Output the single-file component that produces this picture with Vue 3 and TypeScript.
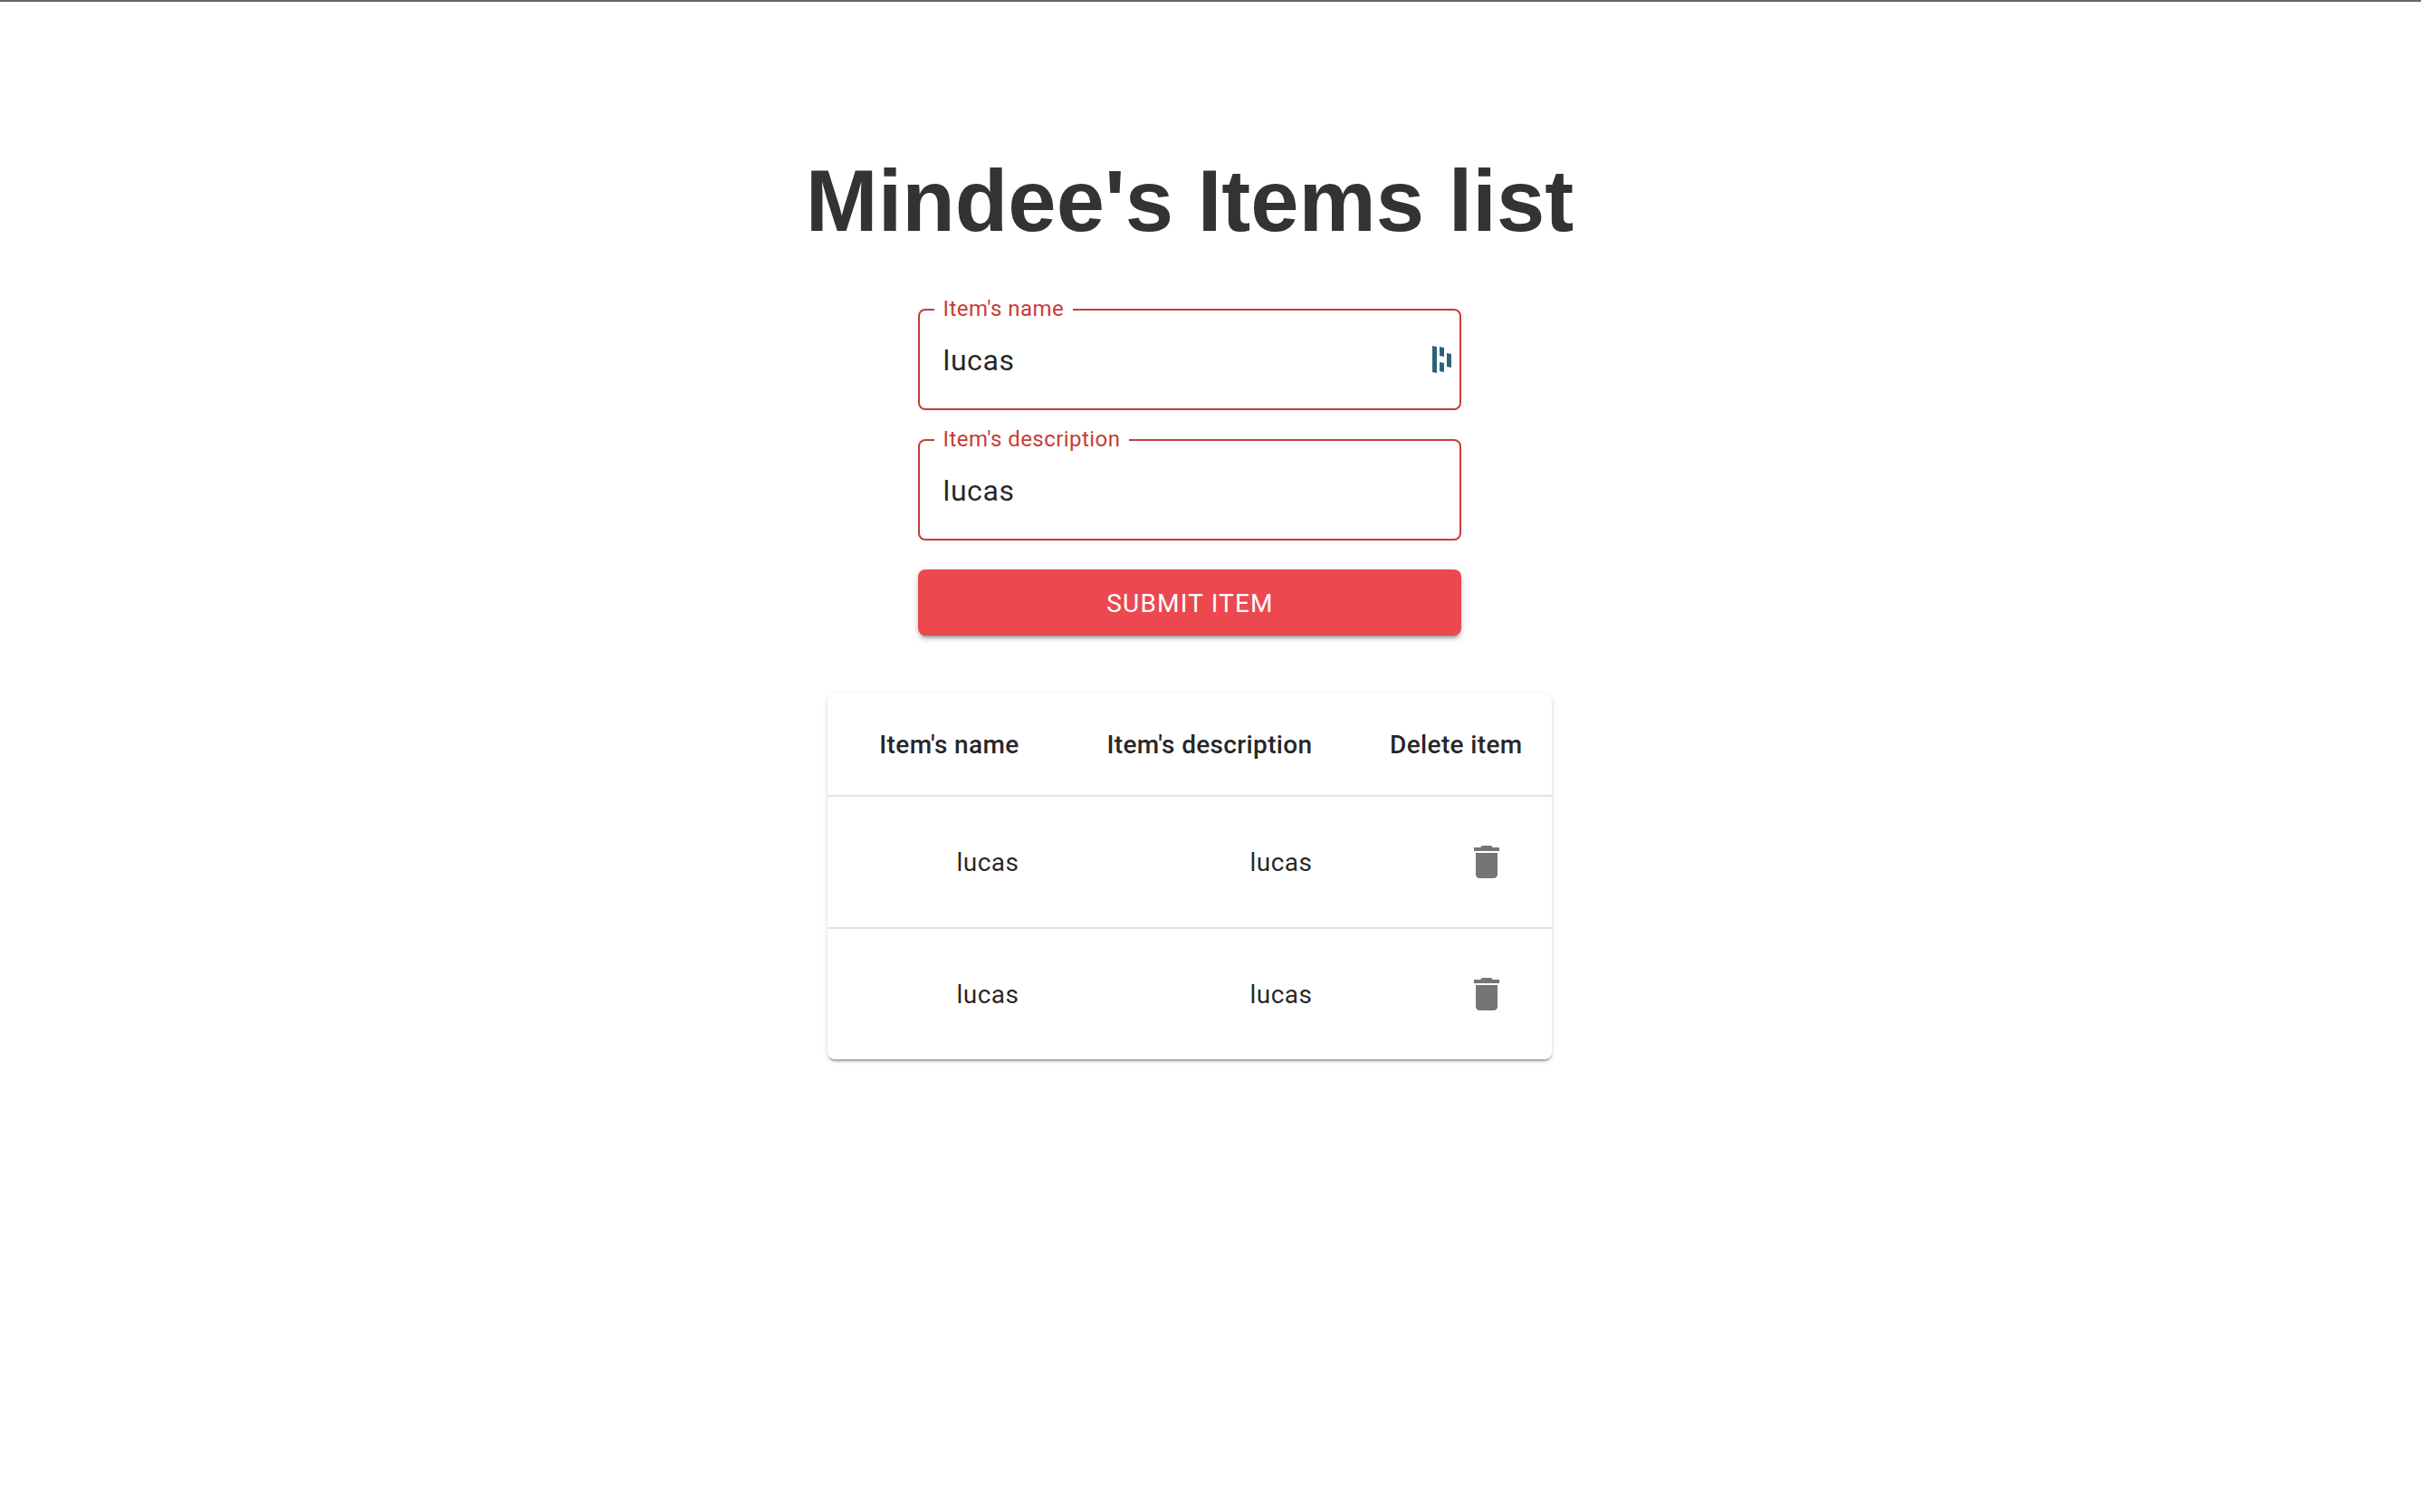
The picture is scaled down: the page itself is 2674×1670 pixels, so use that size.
<template>
  <div class="page">
    <h1 class="page__title">Mindee's Items list</h1>

    <form class="item-form" @submit.prevent>
      <div v-for="(field, index) in fields" :key="field.label" class="field">
        <input v-model="field.value" type="text" class="field__input" />
        <fieldset class="field__outline">
          <legend class="field__label">{{ field.label }}</legend>
        </fieldset>
        <svg v-if="index === 0" class="field__manager" viewBox="0 0 24 32" aria-hidden="true">
          <path d="M1 1l5 1v29l-5-1z" />
          <path d="M9 2l5 1v10l-5-1zM9 19l5 1v10l-5-1z" />
          <path d="M17 9l5 1v15l-5-1z" />
        </svg>
      </div>
      <button type="submit" class="item-form__submit">Submit item</button>
    </form>

    <div class="items">
      <table class="items__table">
        <colgroup>
          <col class="items__col-name" />
          <col class="items__col-desc" />
          <col class="items__col-delete" />
        </colgroup>
        <thead>
          <tr>
            <th>Item's name</th>
            <th>Item's description</th>
            <th>Delete item</th>
          </tr>
        </thead>
        <tbody>
          <tr v-for="(item, index) in items" :key="index">
            <td>{{ item.name }}</td>
            <td>{{ item.description }}</td>
            <td>
              <button type="button" class="items__delete" aria-label="delete" @click="removeItem(index)">
                <svg viewBox="0 0 24 24" aria-hidden="true">
                  <path d="M6 19c0 1.1.9 2 2 2h8c1.1 0 2-.9 2-2V7H6v12zM19 4h-3.5l-1-1h-5l-1 1H5v2h14V4z" />
                </svg>
              </button>
            </td>
          </tr>
        </tbody>
      </table>
    </div>
  </div>
</template>

<script setup lang="ts">
import { reactive, ref } from 'vue';

interface Item {
  name: string;
  description: string;
}

const fields = reactive([
  { label: "Item's name", value: 'lucas' },
  { label: "Item's description", value: 'lucas' },
]);

const items = ref<Item[]>([
  { name: 'lucas', description: 'lucas' },
  { name: 'lucas', description: 'lucas' },
]);

const removeItem = (index: number) => {
  items.value.splice(index, 1);
};
</script>

<style>
html,
body {
  background: #fff;
}
</style>

<style scoped>
.page {
  display: flex;
  flex-direction: column;
  align-items: center;
  box-sizing: border-box;
  width: 100%;
  min-height: 1670px;
  padding-right: 47px;
  border-top: 2px solid #666;
  font-family: Roboto, "Liberation Sans", sans-serif;
}

.page__title {
  margin: 165px 0 0 1px;
  font-family: "Liberation Sans", Arial, sans-serif;
  font-size: 95.85px;
  line-height: 110px;
  font-weight: 700;
  color: #333;
}

.item-form {
  display: flex;
  flex-direction: column;
  gap: 32px;
  width: 600px;
  margin-top: 64px;
}

.field {
  position: relative;
  height: 112px;
}

.field__input {
  box-sizing: border-box;
  width: 100%;
  height: 100%;
  border: none;
  outline: none;
  background: transparent;
  padding: 2px 28px 0;
  font-family: inherit;
  font-size: 32px;
  letter-spacing: 0.6px;
  color: rgba(0, 0, 0, 0.87);
}

.field__outline {
  position: absolute;
  inset: -10px 0 0;
  margin: 0;
  padding: 0 16px;
  border: 2px solid #c83c35;
  border-radius: 8px;
  pointer-events: none;
}

.field__label {
  padding: 0 10px 2px;
  font-size: 24px;
  line-height: 20px;
  letter-spacing: 0.45px;
  color: #c83c35;
}

.field__manager {
  position: absolute;
  top: 40px;
  right: 9px;
  width: 24px;
  height: 32px;
  fill: #2c6377;
}

.item-form__submit {
  height: 73px;
  padding: 2px 0 0 2px;
  border: none;
  border-radius: 8px;
  background: #eb4850;
  color: #fff;
  font-family: inherit;
  font-size: 28px;
  font-weight: 400;
  letter-spacing: 1.2px;
  text-transform: uppercase;
  box-shadow: 0 6px 2px -4px rgba(0, 0, 0, 0.2), 0 4px 4px 0 rgba(0, 0, 0, 0.14), 0 2px 10px 0 rgba(0, 0, 0, 0.12);
}

.items {
  width: 800px;
  margin-top: 64px;
  border-radius: 8px;
  overflow: hidden;
  background: #fff;
  box-shadow: 0 4px 2px -2px rgba(0, 0, 0, 0.2), 0 2px 2px 0 rgba(0, 0, 0, 0.14), 0 2px 6px 0 rgba(0, 0, 0, 0.12);
}

.items__table {
  width: 100%;
  table-layout: fixed;
  border-collapse: collapse;
  font-size: 28px;
  color: rgba(0, 0, 0, 0.87);
}

.items__col-name {
  width: 244px;
}

.items__col-desc {
  width: 324px;
}

.items__col-delete {
  width: 232px;
}

.items__table th,
.items__table td {
  padding: 32px;
  text-align: right;
  border-bottom: 2px solid #e0e0e0;
}

.items__table th {
  font-weight: 500;
  height: 113px;
  box-sizing: border-box;
  white-space: nowrap;
  letter-spacing: 0.35px;
}

.items__table td {
  font-weight: 400;
  letter-spacing: 0.5px;
}

.items__table tbody tr:last-child td {
  border-bottom: none;
}

.items__delete {
  display: inline-flex;
  vertical-align: middle;
  padding: 16px;
  border: none;
  background: none;
  cursor: pointer;
}

.items__delete svg {
  display: block;
  width: 48px;
  height: 48px;
  fill: rgba(0, 0, 0, 0.54);
}
</style>
